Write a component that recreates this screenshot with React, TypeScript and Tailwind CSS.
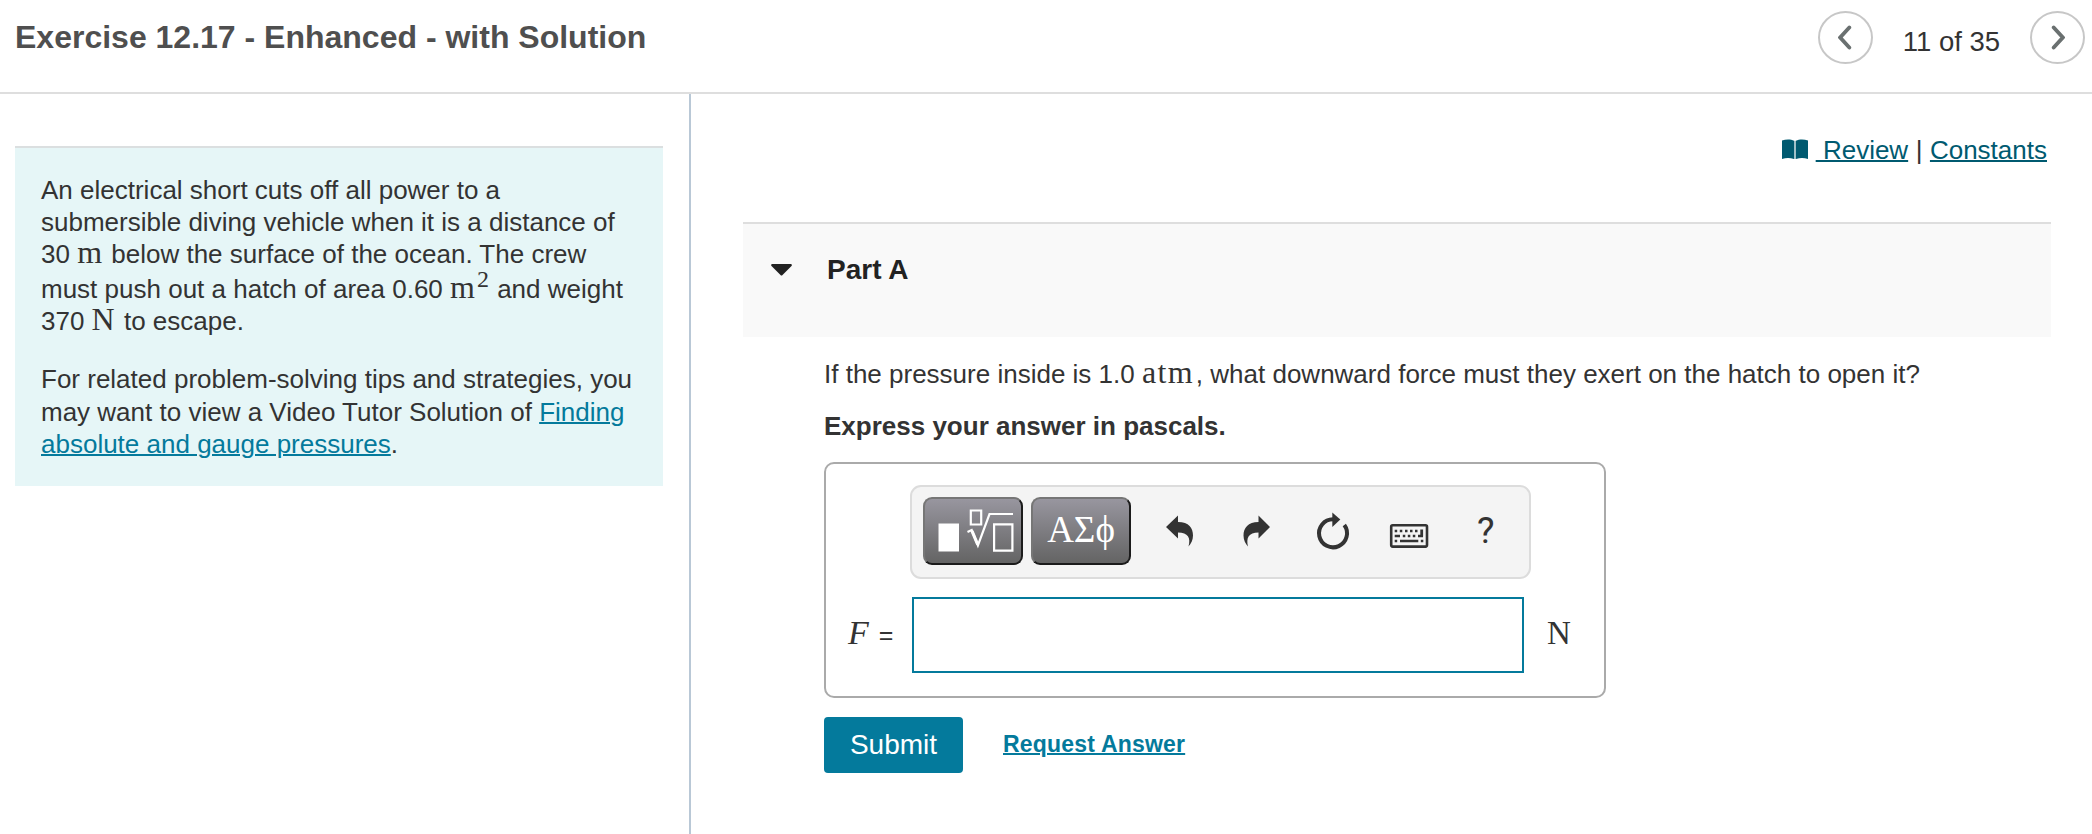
import type { ReactNode } from "react";

const Unit = ({ children, className = "tracking-[2px]" }: { children: ReactNode; className?: string }) => (
  <span className={`font-['Liberation_Serif',serif] text-[32px] leading-[0] ${className}`}>{children}</span>
);

const NavButton = ({ d, label }: { d: string; label: string }) => (
  <button
    aria-label={label}
    className="flex h-[53px] w-[55px] items-center justify-center rounded-[50%] border-2 border-[#c7c7c7]"
  >
    <svg width="15" height="25" viewBox="0 0 15 25" fill="none" aria-hidden="true">
      <path d={d} stroke="#6a7070" strokeWidth="3.8" strokeLinecap="round" />
    </svg>
  </button>
);

const ToolButton = ({ children, label }: { children: ReactNode; label: string }) => (
  <button
    aria-label={label}
    className="flex h-[68px] w-[100px] items-center justify-center rounded-[9px] border-2 border-t-[#767676] border-r-[#1b1b1b] border-b-[#1b1b1b] border-l-[#767676] bg-linear-to-b from-[#98969f] to-[#646464]"
  >
    {children}
  </button>
);

function Toolbar() {
  return (
    <div className="ml-[84px] flex h-[94px] w-[621px] items-start rounded-[11px] border-2 border-[#dcdcdc] bg-[#f4f4f4] pt-[10px] pl-[11px]">
      <div className="flex gap-2">
        <ToolButton label="Templates">
          <svg width="96" height="64" viewBox="0 0 96 64" fill="none" aria-hidden="true">
            <path d="M13.500 24.500h20.500v28h-20.500z" fill="#fff" />
            <path d="M45.800 11.500h10.400v14h-10.400z" stroke="#fff" strokeWidth="2.200" />
            <path d="M69.100 25.300h18.300v26.400h-18.300z" stroke="#fff" strokeWidth="2.200" />
            <path d="M42.500 33l4.200-2 6.200 15.500L64.500 15h23.500" stroke="#fff" strokeWidth="2.200" />
            <path d="M47 32l5.700 13.500" stroke="#fff" strokeWidth="3.200" />
          </svg>
        </ToolButton>
        <ToolButton label="Greek letters">
          <span className="-mt-[3px] font-['Liberation_Serif',serif] text-[37px] leading-none text-white">ΑΣϕ</span>
        </ToolButton>
      </div>
      <svg width="332" height="68" viewBox="0 0 332 68" className="ml-[29px] shrink-0" fill="none" aria-hidden="true">
        {/* undo */}
        <path
          d="M6 30L18 18.500V25C29 25 33 31 33 38.500C33 43 31 47 28.500 49.500C31 41 28 35.500 18 35.500V41.500Z"
          fill="#333"
        />
        {/* redo */}
        <path
          d="M110 30L98.500 18.500V25C88 25 83.500 31 83.500 38.500C83.500 43 85.500 47 88 49.500C86 41 88.500 35.500 98.500 35.500V41.500Z"
          fill="#333"
        />
        {/* reset */}
        <path d="M173 22.300A14 14 0 1 0 184.300 28" stroke="#333" strokeWidth="4" />
        <path d="M172.300 15.500V30L180.300 22.500Z" fill="#333" />
        {/* keyboard */}
        <rect x="231.200" y="28.200" width="35.800" height="21.400" rx="1.500" stroke="#333" strokeWidth="2.600" />
        <path
          d="M234.700 34h2.500M239.800 34h2.500M245 34h2.500M250 34h2.500M255 34h2.500M234.700 39h5.300M242.800 39h2.500M247.800 39h2.500M252.800 39h2.500M258 39h5M234.700 44h2.500M240 44h18.300M260.800 44h2.500"
          stroke="#333"
          strokeWidth="2.400"
        />
        <path d="M261.700 32.500v7" stroke="#333" strokeWidth="2.800" />
      </svg>
      <span className="-ml-[15px] mt-[14px] font-[Roboto,sans-serif] text-[37px] leading-[40px]">?</span>
    </div>
  );
}

export default function App() {
  return (
    <div className="flex h-[834px] w-[2092px] flex-col overflow-hidden bg-white font-['Liberation_Sans',Arial,sans-serif] text-[#333]">
      <header className="flex h-[94px] shrink-0 justify-between border-b-2 border-[#dedede] pt-[11px] pr-[7px] pl-[15px]">
        <h1 className="mt-1 text-[32px] leading-[44px] font-bold text-[#4f4f4f]">
          Exercise 12.17 - Enhanced - with Solution
        </h1>
        <div className="flex">
          <NavButton label="Previous" d="M11.300 2.500L2.200 12.500L11.300 22.500" />
          <span className="mt-[9px] w-[157px] text-center text-[27.500px] leading-[44px]">11 of 35</span>
          <NavButton label="Next" d="M3.700 2.500L12.800 12.500L3.700 22.500" />
        </div>
      </header>

      <div className="flex flex-1">
        <aside className="w-[691px] shrink-0 border-r-2 border-[#b9c8d6] pt-[52px] pl-[15px]">
          <div className="h-[340px] w-[648px] border-t-2 border-[#dbdfe0] bg-[#e6f6f7] pt-[26px] pl-[26px] text-[26px] leading-8 whitespace-nowrap">
            <p>
              An electrical short cuts off all power to a
              <br />
              submersible diving vehicle when it is a distance of
              <br />
              30 <Unit>m</Unit> below the surface of the ocean. The crew
            </p>
            <p className="mt-[3px]">
              must push out a hatch of area 0.60 <Unit>m</Unit>
              <sup className="top-[-11px] mr-px font-['Liberation_Serif',serif] text-[24px]">2</sup> and weight
              <br />
              370 <Unit>N</Unit> to escape.
            </p>
            <p className="mt-[26px] leading-[32.500px]">
              For related problem-solving tips and strategies, you
              <br />
              may want to view a Video Tutor Solution of{" "}
              <a className="text-[#047a9c] underline decoration-2">Finding</a>
              <br />
              <a className="text-[#047a9c] underline decoration-2">absolute and gauge pressures</a>.
            </p>
          </div>
        </aside>

        <main className="flex-1 pr-[41px] pl-[52px]">
          <div className="flex h-[128px] items-start justify-end pt-[40px] pr-1 text-[26px] leading-8">
            <svg width="26" height="21" viewBox="0 0 26 21" className="mt-[5px] mr-2" aria-hidden="true">
              <path d="M0 1.500C4 .2 9 .2 12 1.800V20C8 18.800 4 18.800 0 20ZM14 1.800C17 .2 22 .2 26 1.500V20C22 18.800 18 18.800 14 20Z" fill="#005a70" />
              <path d="M12 1.800h2V20h-2z" fill="#9fc0c8" />
            </svg>
            <a className="whitespace-pre text-[#005a70] underline decoration-2"> Review</a>
            <span className="px-[7.500px]">|</span>
            <a className="text-[#005a70] underline decoration-2">Constants</a>
          </div>

          <section>
            <div className="flex h-[115px] border-t-2 border-[#dedede] bg-[#f9f9f9] pt-[30px] pl-[28px] text-[#222]">
              <svg width="21" height="12" viewBox="0 0 21 12" className="mt-[10px]" aria-hidden="true">
                <path d="M1 0H20Q21.500 .5 20.500 2L11.500 11Q10.500 12 9.500 11L.5 2Q-.5 .5 1 0Z" fill="#222" />
              </svg>
              <h2 className="ml-[35px] text-[28px] leading-8 font-bold">Part A</h2>
            </div>

            <div className="pl-[81px]">
              <p className="mt-[21px] text-[26px] leading-8 whitespace-nowrap">
                If the pressure inside is 1.0 <Unit className="mr-0.5 tracking-[1.300px]">atm</Unit>, what downward force must they exert on the hatch to open it?
              </p>
              <p className="mt-5 text-[26px] leading-8 font-bold">Express your answer in pascals.</p>

              <div className="mt-5 h-[236px] w-[782px] rounded-[10px] border-2 border-[#aaa] pt-[21px]">
                <Toolbar />
                <div className="mt-[18px] flex h-[76px] items-center">
                  <label className="flex w-[86px] items-baseline pl-[22px]">
                    <span className="font-['Liberation_Serif',serif] text-[34px] leading-none italic">F</span>
                    <span className="ml-[10px] text-[25px]">=</span>
                  </label>
                  <input aria-label="Answer" className="h-[76px] w-[612px] border-2 border-[#047a9c] bg-white" />
                  <span className="-mt-1 ml-[23px] font-['Liberation_Serif',serif] text-[33px] leading-none">N</span>
                </div>
              </div>

              <div className="mt-[19px] flex h-14 items-center">
                <button className="h-14 w-[139px] rounded-[4px] bg-[#047a9c] text-[28px] text-white">Submit</button>
                <a className="-mt-px ml-10 text-[23px] font-bold tracking-[0.200px] text-[#047a9c] underline decoration-2">
                  Request Answer
                </a>
              </div>
            </div>
          </section>
        </main>
      </div>
    </div>
  );
}
